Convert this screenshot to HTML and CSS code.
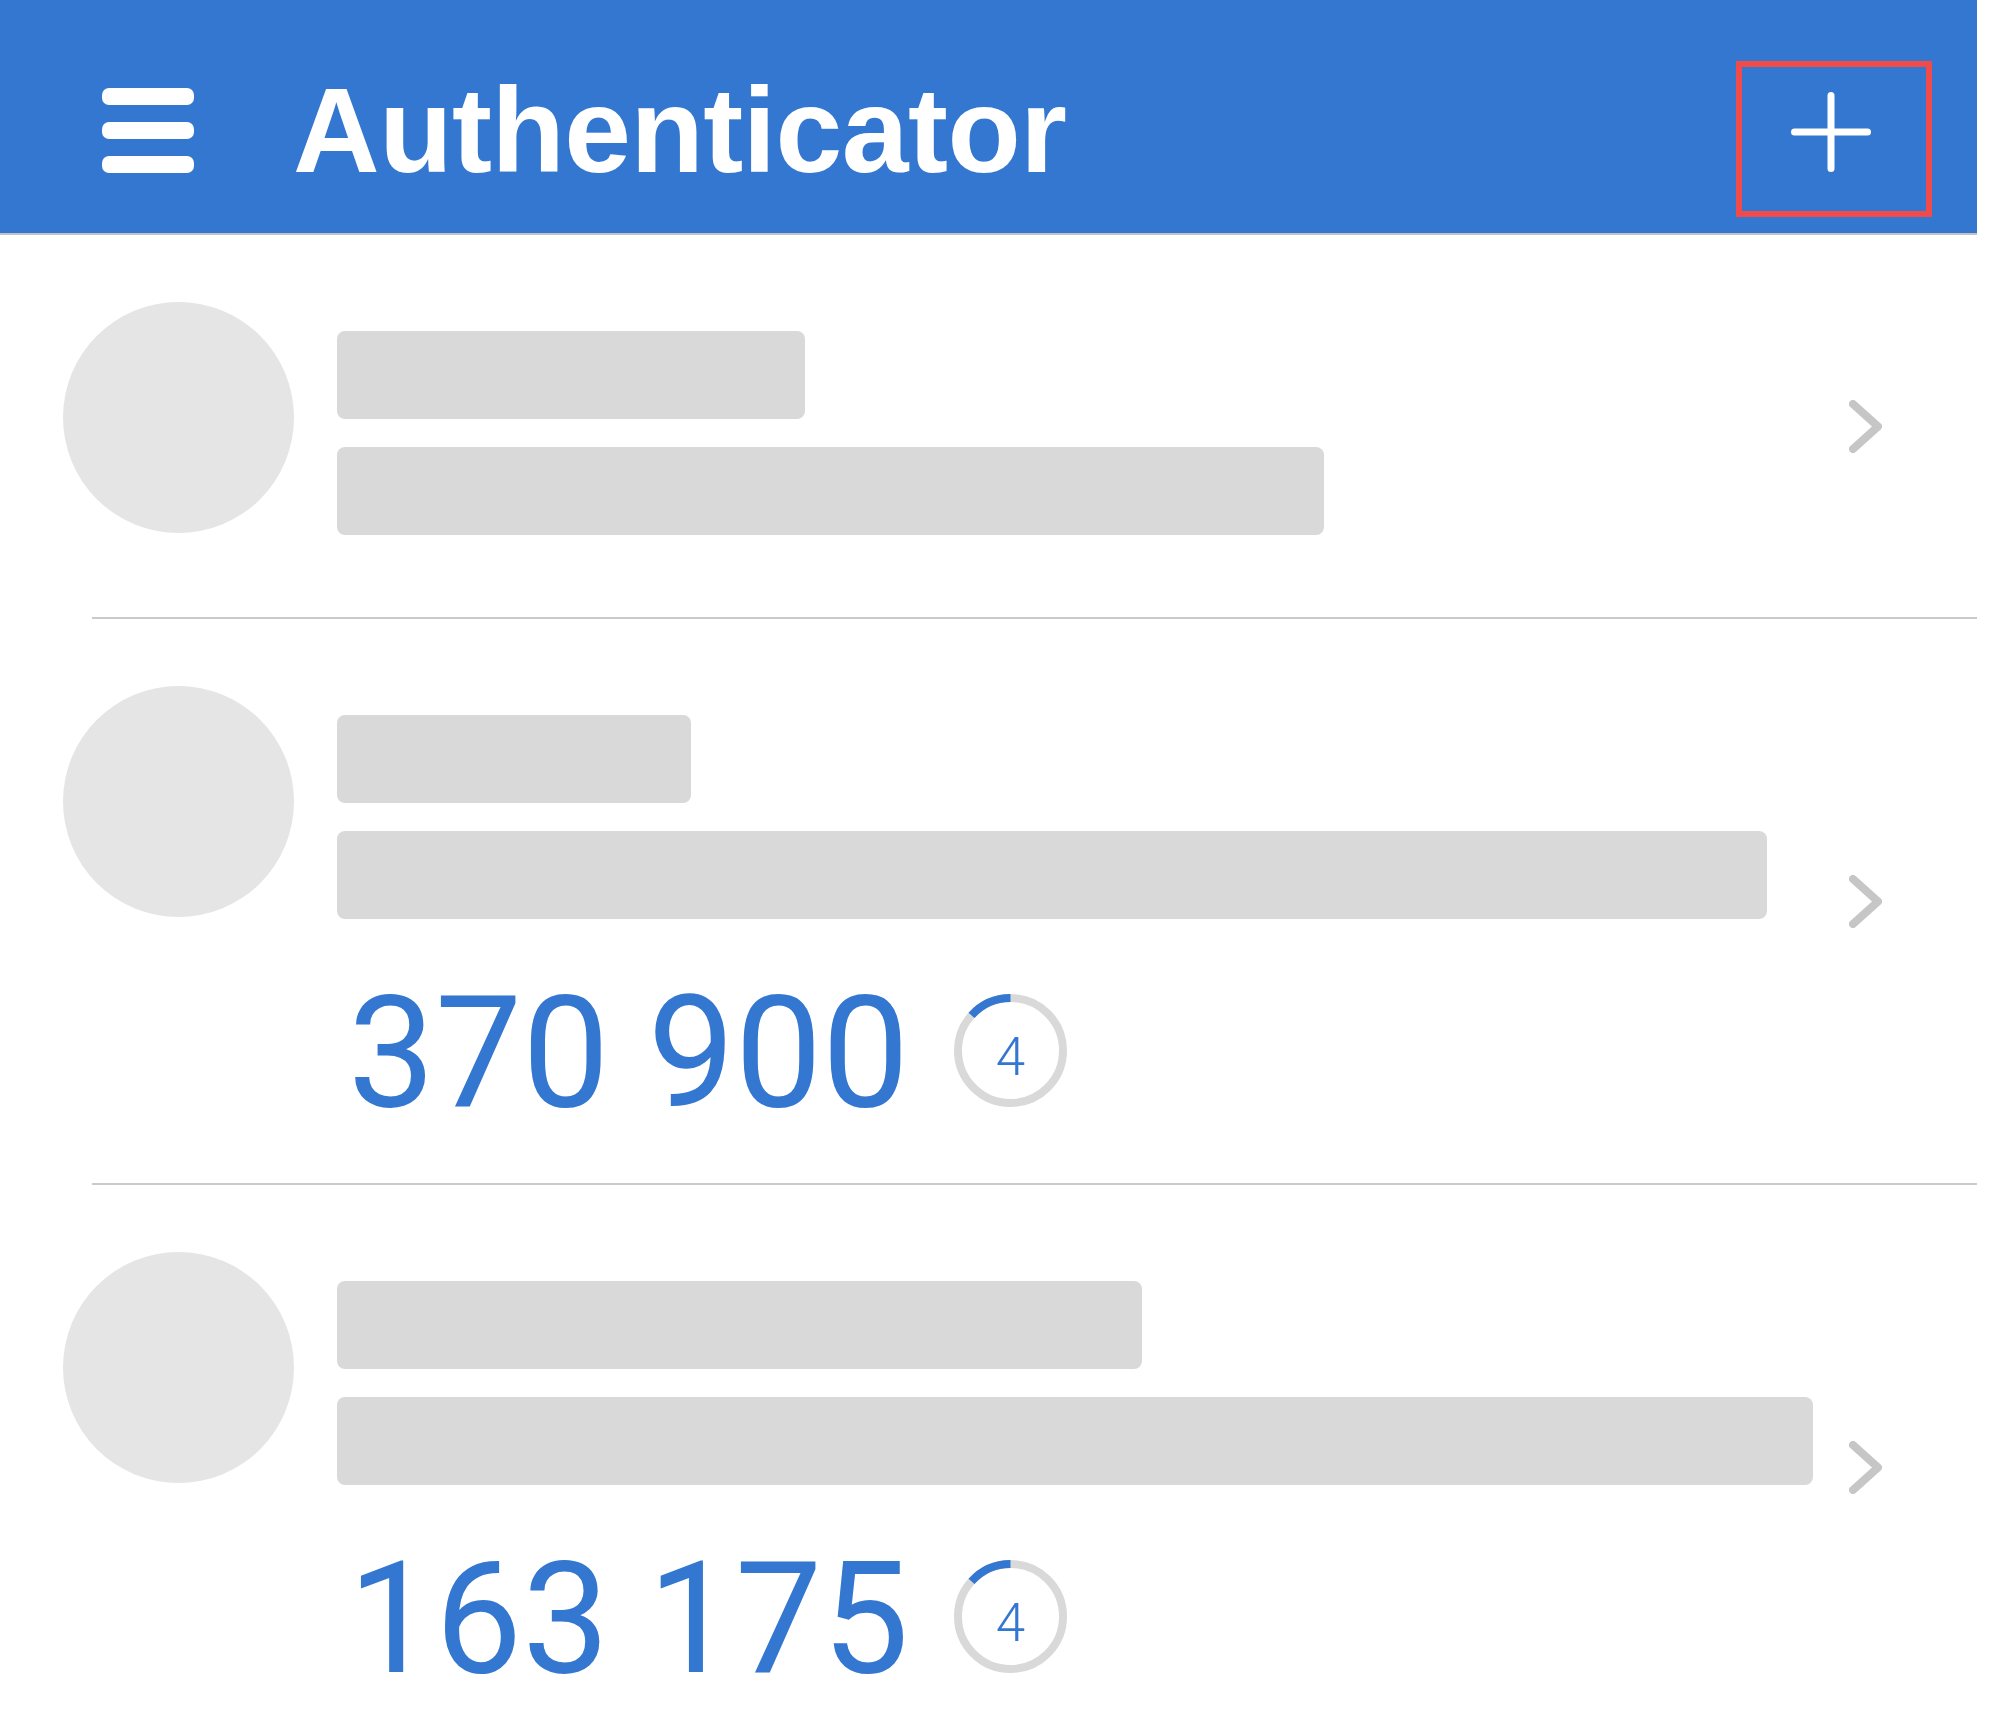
FILE: index.html
```html
<!DOCTYPE html>
<html lang="en">
<head>
    <meta charset="UTF-8">
    <meta name="viewport" content="width=device-width, initial-scale=1.0">
    <title>Authenticator</title>
    <link rel="stylesheet" href="styles.css">
</head>
<body>
    <div class="app">
        <header class="topbar">
            <div class="menu-btn">
                <span></span>
                <span></span>
                <span></span>
            </div>
            <h1 class="title">Authenticator</h1>
            <button class="add-btn" aria-label="Add account">
                <svg width="80" height="80" viewBox="0 0 80 80">
                    <path d="M3.5 40 H76.5 M40 3.5 V76.5" stroke="#fff" stroke-width="7" stroke-linecap="round" fill="none"/>
                </svg>
            </button>
        </header>

        <div class="account-list">
            <div class="account">
                <div class="avatar"></div>
                <div class="info">
                    <div class="bar" style="width: 468px"></div>
                    <div class="bar" style="width: 987px"></div>
                </div>
                <svg class="chevron" width="33" height="53" viewBox="0 0 33 53">
                    <polyline points="4,4 29,26.5 4,49" />
                </svg>
            </div>
            <hr class="divider">

            <div class="account">
                <div class="avatar"></div>
                <div class="info">
                    <div class="bar" style="width: 354px"></div>
                    <div class="bar" style="width: 1430px"></div>
                    <div class="code">
                        <span class="digits">370 900</span>
                        <svg class="timer" width="113" height="113" viewBox="0 0 113 113">
                            <circle cx="56.5" cy="56.5" r="52.5" class="timer-track"/>
                            <path d="M56.5 4 A52.5 52.5 0 0 0 17.5 21.4" class="timer-left"/>
                            <text x="56.5" y="81" class="timer-num">4</text>
                        </svg>
                    </div>
                </div>
                <svg class="chevron" width="33" height="53" viewBox="0 0 33 53">
                    <polyline points="4,4 29,26.5 4,49" />
                </svg>
            </div>
            <hr class="divider">

            <div class="account">
                <div class="avatar"></div>
                <div class="info">
                    <div class="bar" style="width: 805px"></div>
                    <div class="bar" style="width: 1476px"></div>
                    <div class="code">
                        <span class="digits">163 175</span>
                        <svg class="timer" width="113" height="113" viewBox="0 0 113 113">
                            <circle cx="56.5" cy="56.5" r="52.5" class="timer-track"/>
                            <path d="M56.5 4 A52.5 52.5 0 0 0 17.5 21.4" class="timer-left"/>
                            <text x="56.5" y="81" class="timer-num">4</text>
                        </svg>
                    </div>
                </div>
                <svg class="chevron" width="33" height="53" viewBox="0 0 33 53">
                    <polyline points="4,4 29,26.5 4,49" />
                </svg>
            </div>
        </div>
    </div>
</body>
</html>
```

FILE: styles.css
```css
body {
    margin: 0;
    padding: 0;
    background: #fff;
    font-family: 'Liberation Sans', Arial, sans-serif;
    overflow: hidden;
}

.app {
    width: 1977px;
}

/* top bar */
.topbar {
    display: flex;
    align-items: center;
    height: 206px;
    padding: 27px 45px 0 102px;
    background-color: #3477d0;
    border-bottom: 2px solid #c2c2c2;
}

.menu-btn {
    display: flex;
    flex-direction: column;
    gap: 17px;
    width: 92px;
    flex: none;
}

.menu-btn span {
    display: block;
    height: 17px;
    border-radius: 7px;
    background: #fff;
}

.title {
    margin: 0 0 0 99px;
    font-size: 120px;
    font-weight: bold;
    line-height: 1;
    color: #fff;
    letter-spacing: -0.5px;
}

.add-btn {
    display: flex;
    align-items: center;
    justify-content: center;
    margin: 18px 0 0 auto;
    width: 196px;
    height: 156px;
    padding: 0 6px 14px 0;
    box-sizing: border-box;
    border: 6px solid #f04a4a;
    background: transparent;
    cursor: pointer;
}

/* accounts */
.account {
    display: flex;
    align-items: flex-start;
}

.avatar {
    flex: none;
    width: 231px;
    height: 231px;
    margin: 67px 0 0 63px;
    border-radius: 50%;
    background: #e5e5e5;
}

.info {
    flex: 1;
    margin-left: 43px;
    padding: 96px 0 82px 0;
}

.bar {
    height: 88px;
    border-radius: 8px;
    background: #d9d9d9;
}

.bar + .bar {
    margin-top: 28px;
}

.code {
    display: flex;
    align-items: center;
    margin-top: 86px;
    height: 96px;
}

.digits {
    padding-left: 11px;
    font-family: Roboto, 'Liberation Sans', sans-serif;
    font-size: 155px;
    line-height: 96px;
    color: #3477d0;
    white-space: pre;
}

.timer {
    margin: 0 0 5px 45px;
    flex: none;
}

.timer-track {
    fill: none;
    stroke: #d9d9d9;
    stroke-width: 8;
}

.timer-left {
    fill: none;
    stroke: #3477d0;
    stroke-width: 8;
}

.timer-num {
    font-family: Roboto, 'Liberation Sans', sans-serif;
    font-weight: 300;
    font-size: 53px;
    fill: #3477d0;
    text-anchor: middle;
}

.chevron {
    flex: none;
    align-self: center;
    margin-right: 95px;
}

.chevron polyline {
    fill: none;
    stroke: #c6c6c6;
    stroke-width: 8;
    stroke-linecap: round;
    stroke-linejoin: round;
}

.divider {
    margin: 0 0 0 92px;
    height: 0;
    border: none;
    border-top: 2px solid #cacaca;
}
```
